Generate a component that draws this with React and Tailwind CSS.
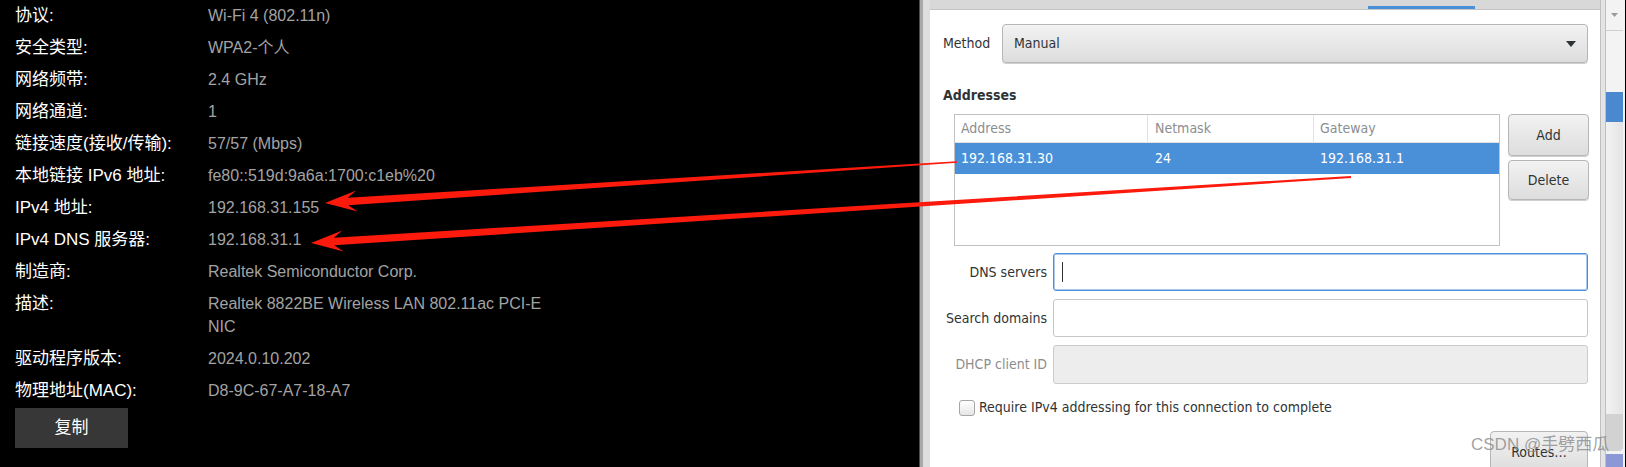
import React from "react";

const info = [
  ["协议:", "Wi-Fi 4 (802.11n)"],
  ["安全类型:", "WPA2-个人"],
  ["网络频带:", "2.4 GHz"],
  ["网络通道:", "1"],
  ["链接速度(接收/传输):", "57/57 (Mbps)"],
  ["本地链接 IPv6 地址:", "fe80::519d:9a6a:1700:c1eb%20"],
  ["IPv4 地址:", "192.168.31.155"],
  ["IPv4 DNS 服务器:", "192.168.31.1"],
  ["制造商:", "Realtek Semiconductor Corp."],
  ["描述:", ["Realtek 8822BE Wireless LAN 802.11ac PCI-E", "NIC"]],
  ["驱动程序版本:", "2024.0.10.202"],
  ["物理地址(MAC):", "D8-9C-67-A7-18-A7"],
];

// tapered arrow polygon, tip -> end
function arrowPoints(tip, end, w0, w1, L, W) {
  const dx = end[0] - tip[0];
  const dy = end[1] - tip[1];
  const len = Math.hypot(dx, dy);
  const ux = dx / len;
  const uy = dy / len;
  const nx = -uy;
  const ny = ux;
  const p = (t, n) => [tip[0] + ux * t + nx * n, tip[1] + uy * t + ny * n];
  const pts = [
    p(0, 0),
    p(L, W),
    p(L * 0.72, w0 / 2),
    p(len, w1 / 2),
    p(len, -w1 / 2),
    p(L * 0.72, -w0 / 2),
    p(L, -W),
  ];
  return pts.map((q) => q[0].toFixed(1) + "," + q[1].toFixed(1)).join(" ");
}

function WinDetails() {
  return (
    <div className="w-[919px] shrink-0 bg-black pt-[4px] pl-[15px] font-['Liberation_Sans','Noto_Sans_CJK_SC',sans-serif]">
      <div className="flex flex-col gap-[9px]">
        {info.map(([label, value]) => (
          <div key={label} className="flex leading-[23px]">
            <div className="w-[193px] shrink-0 text-[17px] text-white">{label}</div>
            <div className="text-[16px] text-[#a3a3a3]">
              {Array.isArray(value)
                ? value.map((v) => <div key={v}>{v}</div>)
                : value}
            </div>
          </div>
        ))}
      </div>
      <button className="mt-[6px] flex h-[40px] w-[113px] items-center justify-center bg-[#373737] text-[17px] text-white">
        复制
      </button>
    </div>
  );
}

function GButton({ children, className }) {
  return (
    <div
      className={
        "flex items-center justify-center rounded-[4px] border border-[#b6b6b6] bg-gradient-to-b from-[#f2f2f2] to-[#dddddd] text-[#2e3436] shadow-[0_1px_0_#cfcfcf] " +
        className
      }
    >
      {children}
    </div>
  );
}

function NetSettings() {
  return (
    <div className="h-[467px] w-[670px] shrink-0 overflow-hidden bg-white text-[14px] text-[#2e3436] font-['DejaVu_Sans_Condensed','Liberation_Sans_Narrow','DejaVu_Sans',sans-serif]">
      {/* tab strip */}
      <div className="flex h-[10px] items-end border-b border-[#c4c4c4] bg-[#d8d8d8] pl-[438px]">
        <div className="h-[3px] w-[107px] bg-[#4a90d9]" />
      </div>

      {/* method */}
      <div className="mt-[14px] flex items-center pl-[13px] pr-[12px]">
        <div className="w-[59px]">Method</div>
        <GButton className="h-[39px] flex-1 !justify-between px-[11px]">
          <span>Manual</span>
          <svg width="10" height="6" viewBox="0 0 10 6">
            <path d="M0 0 L10 0 L5 6 Z" fill="#2e3436" />
          </svg>
        </GButton>
      </div>

      <div className="mt-[23px] pl-[13px] font-bold leading-[18px]">Addresses</div>

      {/* address table */}
      <div className="mt-[10px] flex pl-[24px] pr-[11px]">
        <div className="h-[132px] w-[546px] border border-[#c2c2c2] bg-white">
          <div className="flex h-[28px] items-center border-b border-[#e2e2e2] text-[#8b8e8f]">
            <div className="w-[193px] border-r border-[#e2e2e2] pl-[6px] leading-[27px]">Address</div>
            <div className="w-[166px] border-r border-[#e2e2e2] pl-[7px] leading-[27px]">Netmask</div>
            <div className="flex-1 pl-[6px]">Gateway</div>
          </div>
          <div className="flex h-[31px] items-center bg-[#4a90d9] text-white">
            <div className="w-[193px] pl-[6px]">192.168.31.30</div>
            <div className="w-[166px] pl-[7px]">24</div>
            <div className="flex-1 pl-[6px]">192.168.31.1</div>
          </div>
        </div>
        <div className="ml-[8px] flex w-[81px] flex-col gap-[4px]">
          <GButton className="h-[42px]">Add</GButton>
          <GButton className="h-[40px]">Delete</GButton>
        </div>
      </div>

      {/* form rows */}
      <div className="mt-[7px] flex flex-col gap-[8px] pr-[12px]">
        <div className="flex items-center">
          <div className="w-[123px] pr-[6px] text-right">DNS servers</div>
          <div className="flex h-[38px] flex-1 items-center rounded-[3px] border border-[#4a90d9] bg-white pl-[8px] shadow-[inset_0_0_0_1px_#a9c9ee]">
            <div className="h-[20px] w-[1px] bg-[#2e3436]" />
          </div>
        </div>
        <div className="flex items-center">
          <div className="w-[123px] pr-[6px] text-right">Search domains</div>
          <div className="h-[38px] flex-1 rounded-[3px] border border-[#c6c6c6] bg-white" />
        </div>
        <div className="flex items-center">
          <div className="w-[123px] pr-[6px] text-right text-[#8b8e8f]">DHCP client ID</div>
          <div className="h-[39px] flex-1 rounded-[3px] border border-[#cbcbcb] bg-[#ededed]" />
        </div>
      </div>

      <div className="mt-[13px] flex items-center pl-[29px]">
        <div className="h-[16px] w-[16px] rounded-[3px] border border-[#a6a6a6] bg-gradient-to-b from-white to-[#e6e6e6]" />
        <span className="ml-[4px]">Require IPv4 addressing for this connection to complete</span>
      </div>

      <div className="mt-[13px] flex justify-end pr-[12px]">
        <GButton className="h-[42px] w-[98px]">Routes…</GButton>
      </div>
    </div>
  );
}

function SideStrip() {
  return (
    <div className="flex h-[467px] shrink-0">
      <div className="w-[6px] border-x border-[#bfbfbf] bg-[#e4e4e4]" />
      <div className="flex w-[19px] flex-col bg-[#f3f3f3] pr-[2px]">
        <div className="flex h-[31px] shrink-0 items-center justify-center border-b border-[#cfcfcf]">
          <svg width="7" height="4" viewBox="0 0 7 4">
            <path d="M0 0 L7 0 L3.5 4 Z" fill="#9a9a9a" />
          </svg>
        </div>
        <div className="h-[61px] shrink-0" />
        <div className="h-[30px] shrink-0 bg-[#4a88d0]" />
        <div className="flex-1 bg-gradient-to-r from-[#f2f2f2] to-[#e4e4e4]" />
        <div className="h-[37px] shrink-0 rounded-b-[4px] bg-[#d2d2d2]" />
        <div className="mt-[3px] h-[13px] shrink-0 bg-[#8c98d6]" />
      </div>
    </div>
  );
}

export default function App() {
  const a1 = arrowPoints([325, 203], [957, 162], 7.5, 1.5, 32, 10.5);
  const a2 = arrowPoints([311, 243], [1351, 177], 7.5, 2, 32, 10.5);
  return (
    <div className="relative flex h-[467px] w-[1626px] overflow-hidden bg-black">
      <WinDetails />
      <div className="flex shrink-0">
        <div className="w-[1px] bg-[#4d4d4d]" />
        <div className="w-[3px] bg-[#a9a9a9]" />
        <div className="w-[7px] bg-[#dedede]" />
      </div>
      <NetSettings />
      <SideStrip />

      <svg className="pointer-events-none absolute inset-0" width="1626" height="467">
        <polygon points={a1} fill="#fc1a0c" />
        <polygon points={a2} fill="#fc1a0c" />
      </svg>

      <div className="pointer-events-none absolute left-[1471px] top-[433px] whitespace-nowrap text-[17px] leading-[24px] text-[#8a8a8a]/80 font-['Liberation_Sans','Noto_Sans_CJK_SC',sans-serif]">
        CSDN @手劈西瓜
      </div>
    </div>
  );
}
